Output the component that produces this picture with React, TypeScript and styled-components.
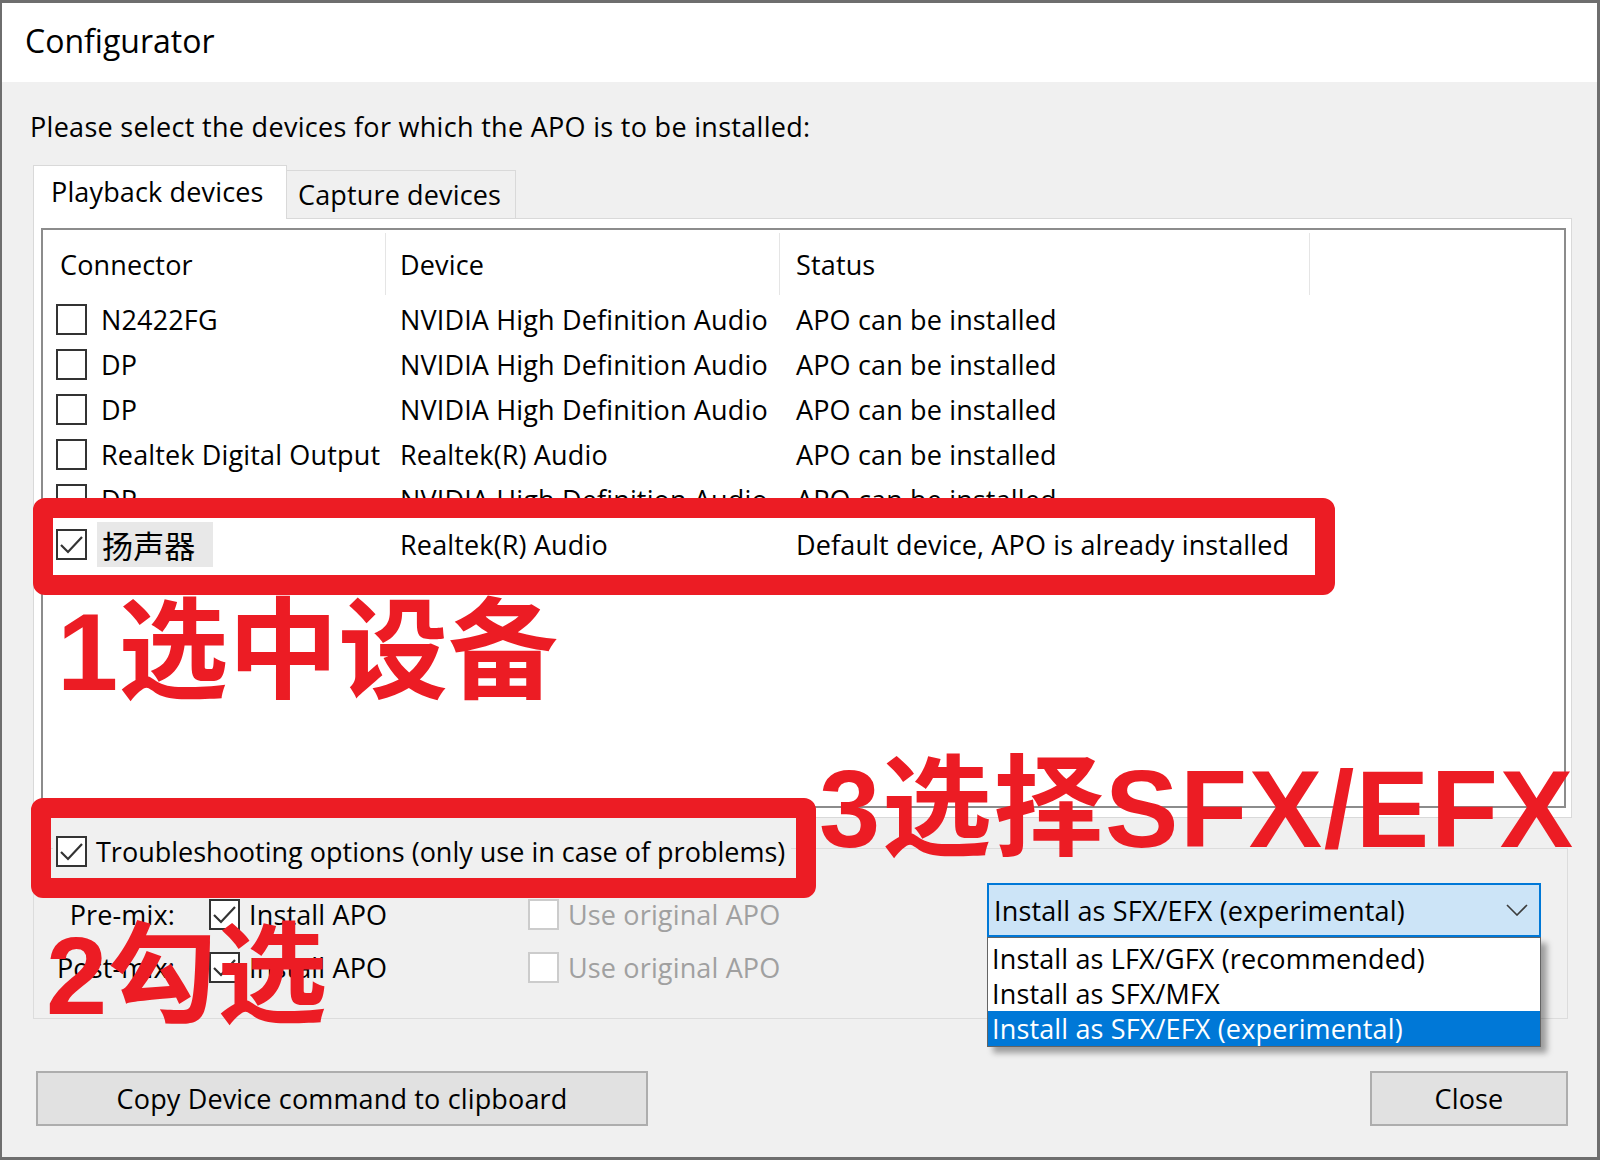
import React from 'react';
import styled, { createGlobalStyle } from 'styled-components';

const GlobalStyle = createGlobalStyle`
  html, body { margin: 0; padding: 0; background: #ffffff; }
  body { font-family: "Open Sans", "Noto Sans CJK SC", sans-serif; color: #000; }
  * { box-sizing: border-box; }
`;

const Window = styled.div`
  position: relative;
  width: 1600px;
  height: 1160px;
  display: flex;
  flex-direction: column;
  background: #f0f0f0;
  border: 3px solid #6e6e6e;
  border-left-width: 2px;
  overflow: hidden;
  font-size: 27px;
  line-height: 37px;
  letter-spacing: 0.15px;
`;

const TitleBar = styled.div`
  height: 79px;
  flex-shrink: 0;
  display: flex;
  align-items: center;
  padding: 0 0 4px 23px;
  background: #ffffff;
  font-size: 32px;
  line-height: 44px;
  letter-spacing: 0;
  color: #000;
`;

const Body = styled.div`
  flex: 1;
  display: flex;
  flex-direction: column;
  padding: 26px 25px 0 31px;
`;

const Prompt = styled.div`
  margin-left: -3px;
  height: 37px;
  letter-spacing: 0.3px;
  white-space: nowrap;
`;

const TabStrip = styled.div`
  display: flex;
  align-items: flex-end;
  height: 53px;
  margin-top: 20px;
`;

const Tab = styled.div<{ $active?: boolean; $w: number }>`
  position: relative;
  width: ${(p) => p.$w}px;
  height: ${(p) => (p.$active ? 54 : 48)}px;
  margin-bottom: ${(p) => (p.$active ? -1 : 0)}px;
  z-index: ${(p) => (p.$active ? 1 : 0)};
  background: ${(p) => (p.$active ? '#ffffff' : '#f0f0f0')};
  border: 1px solid #d9d9d9;
  border-bottom: none;
  border-left-width: ${(p) => (p.$active ? 1 : 0)}px;
  padding: ${(p) => (p.$active ? '7px 0 0 17px' : '5px 0 0 11px')};
  white-space: nowrap;
`;

const TabPanel = styled.div`
  height: 600px;
  background: #ffffff;
  border: 1px solid #d9d9d9;
  padding: 9px 5px 9px 7px;
`;

const ListBox = styled.div`
  height: 100%;
  background: #ffffff;
  border: 2px solid #8c8c8c;
`;

const columns = '343px 394px 530px 1fr';

const HeaderRow = styled.div`
  display: grid;
  grid-template-columns: ${columns};
  height: 67px;
`;

const HeaderCell = styled.div<{ $indent: number; $last?: boolean }>`
  margin-top: 3px;
  height: 62px;
  display: flex;
  align-items: center;
  padding-left: ${(p) => p.$indent}px;
  border-right: ${(p) => (p.$last ? 'none' : '1px solid #e5e5e5')};
`;

const Row = styled.div`
  display: grid;
  grid-template-columns: ${columns};
  height: 45px;
  align-items: center;
`;

const Cell = styled.div<{ $indent: number }>`
  height: 45px;
  display: flex;
  align-items: center;
  gap: 14px;
  padding-left: ${(p) => p.$indent}px;
  white-space: nowrap;
`;

const ItemLabel = styled.span<{ $selected?: boolean; $cjk?: boolean }>`
  height: 45px;
  display: flex;
  align-items: center;
  margin-left: ${(p) => (p.$selected ? -4 : 0)}px;
  padding: ${(p) => (p.$selected ? '0 18px 0 5px' : '0')};
  background: ${(p) => (p.$selected ? '#e8e8e8' : 'transparent')};
  font-family: ${(p) => (p.$cjk ? '"Noto Sans CJK SC", sans-serif' : 'inherit')};
  font-size: ${(p) => (p.$cjk ? 31 : 27)}px;
`;

const Box = styled.span<{ $disabled?: boolean }>`
  width: 31px;
  height: 31px;
  flex-shrink: 0;
  display: flex;
  background: #ffffff;
  border: 2px solid ${(p) => (p.$disabled ? '#cccccc' : '#333333')};
`;

const GroupBox = styled.div`
  margin-top: 30px;
  margin-right: 4px;
  border: 1px solid #dcdcdc;
  display: flex;
  flex-direction: column;
  padding-bottom: 24px;
`;

const GroupHeader = styled.div`
  align-self: flex-start;
  margin: -17px 0 0 19px;
  height: 38px;
  display: flex;
  align-items: center;
  gap: 9px;
  padding: 0 6px 0 3px;
  background: #f0f0f0;
  white-space: nowrap;
  letter-spacing: 0;
`;

const GroupBody = styled.div`
  display: flex;
  align-items: flex-start;
  margin-top: 18px;
`;

const OptionGrid = styled.div`
  display: grid;
  grid-template-columns: 141px 285px auto;
  grid-auto-rows: 53px;
  column-gap: 34px;
  align-items: center;
`;

const OptionLabel = styled.span`
  justify-self: end;
  white-space: nowrap;
`;

const Option = styled.label<{ $disabled?: boolean }>`
  display: flex;
  align-items: center;
  gap: 9px;
  white-space: nowrap;
  color: ${(p) => (p.$disabled ? '#a0a0a0' : '#000')};
`;

const ComboWrap = styled.div`
  position: relative;
  margin: -5px 26px 0 auto;
  width: 554px;
  height: 54px;
`;

const Combo = styled.div`
  height: 100%;
  display: flex;
  align-items: center;
  justify-content: space-between;
  padding: 0 11px 0 5px;
  background: #cce4f7;
  border: 2px solid #0078d7;
  white-space: nowrap;
`;

const DropList = styled.div`
  position: absolute;
  top: 100%;
  left: 0;
  right: 0;
  z-index: 2;
  background: #ffffff;
  border: 1px solid #646464;
  padding-top: 3px;
  box-shadow: 6px 6px 6px rgba(0, 0, 0, 0.35);
`;

const DropItem = styled.div<{ $selected?: boolean }>`
  height: 35px;
  display: flex;
  align-items: center;
  padding-left: 4px;
  white-space: nowrap;
  background: ${(p) => (p.$selected ? '#0078d7' : 'transparent')};
  color: ${(p) => (p.$selected ? '#ffffff' : '#000')};
`;

const ButtonRow = styled.div`
  display: flex;
  justify-content: space-between;
  margin-top: 52px;
  padding: 0 4px 0 3px;
`;

const Button = styled.button<{ $w: number }>`
  width: ${(p) => p.$w}px;
  height: 55px;
  background: #e1e1e1;
  border: 2px solid #adadad;
  font-family: inherit;
  font-size: 27px;
  letter-spacing: 0.15px;
  color: #000;
  padding: 0;
`;

const Highlight = styled.div<{ $x: number; $y: number; $w: number; $h: number }>`
  position: absolute;
  left: ${(p) => p.$x}px;
  top: ${(p) => p.$y}px;
  width: ${(p) => p.$w}px;
  height: ${(p) => p.$h}px;
  border: 20px solid #ec1c24;
  border-radius: 12px;
  z-index: 5;
`;

const Callout = styled.div<{ $x: number; $y: number; $spacing?: number }>`
  position: absolute;
  left: ${(p) => p.$x}px;
  top: ${(p) => p.$y}px;
  z-index: 6;
  font-family: "Liberation Sans", "Noto Sans CJK SC", sans-serif;
  font-weight: 700;
  font-size: 110px;
  line-height: 110px;
  letter-spacing: ${(p) => p.$spacing ?? 0}px;
  color: #ec1c24;
  white-space: nowrap;
`;

const CheckBox = ({ checked, disabled }: { checked?: boolean; disabled?: boolean }) => (
  <Box $disabled={disabled}>
    {checked && (
      <svg width="27" height="27" viewBox="0 0 27 27">
        <polyline points="3,14 10,21 24,6" fill="none" stroke="#333333" strokeWidth="2.2" />
      </svg>
    )}
  </Box>
);

const Chevron = () => (
  <svg width="22" height="12" viewBox="0 0 22 12">
    <polyline points="1,1 11,11 21,1" fill="none" stroke="#3c3c3c" strokeWidth="1.6" />
  </svg>
);

type Device = {
  connector: string;
  device: string;
  status: string;
  checked?: boolean;
  selected?: boolean;
  cjk?: boolean;
};

const devices: Device[] = [
  { connector: 'N2422FG', device: 'NVIDIA High Definition Audio', status: 'APO can be installed' },
  { connector: 'DP', device: 'NVIDIA High Definition Audio', status: 'APO can be installed' },
  { connector: 'DP', device: 'NVIDIA High Definition Audio', status: 'APO can be installed' },
  { connector: 'Realtek Digital Output', device: 'Realtek(R) Audio', status: 'APO can be installed' },
  { connector: 'DP', device: 'NVIDIA High Definition Audio', status: 'APO can be installed' },
  {
    connector: '扬声器',
    device: 'Realtek(R) Audio',
    status: 'Default device, APO is already installed',
    checked: true,
    selected: true,
    cjk: true,
  },
];

const modes = [
  'Install as LFX/GFX (recommended)',
  'Install as SFX/MFX',
  'Install as SFX/EFX (experimental)',
];

export default function App() {
  return (
    <>
      <GlobalStyle />
      <Window>
        <TitleBar>Configurator</TitleBar>
        <Body>
          <Prompt>Please select the devices for which the APO is to be installed:</Prompt>
          <TabStrip>
            <Tab $active $w={254}>Playback devices</Tab>
            <Tab $w={229}>Capture devices</Tab>
          </TabStrip>
          <TabPanel>
            <ListBox>
              <HeaderRow>
                <HeaderCell $indent={17}>Connector</HeaderCell>
                <HeaderCell $indent={14}>Device</HeaderCell>
                <HeaderCell $indent={16}>Status</HeaderCell>
                <HeaderCell $indent={0} $last />
              </HeaderRow>
              {devices.map((d, i) => (
                <Row key={i}>
                  <Cell $indent={13}>
                    <CheckBox checked={d.checked} />
                    <ItemLabel $selected={d.selected} $cjk={d.cjk}>
                      {d.connector}
                    </ItemLabel>
                  </Cell>
                  <Cell $indent={14}>{d.device}</Cell>
                  <Cell $indent={16}>{d.status}</Cell>
                  <Cell $indent={0} />
                </Row>
              ))}
            </ListBox>
          </TabPanel>
          <GroupBox>
            <GroupHeader>
              <CheckBox checked />
              <span>Troubleshooting options (only use in case of problems)</span>
            </GroupHeader>
            <GroupBody>
              <OptionGrid>
                <OptionLabel>Pre-mix:</OptionLabel>
                <Option>
                  <CheckBox checked />
                  Install APO
                </Option>
                <Option $disabled>
                  <CheckBox disabled />
                  Use original APO
                </Option>
                <OptionLabel>Post-mix:</OptionLabel>
                <Option>
                  <CheckBox checked />
                  Install APO
                </Option>
                <Option $disabled>
                  <CheckBox disabled />
                  Use original APO
                </Option>
              </OptionGrid>
              <ComboWrap>
                <Combo>
                  <span>Install as SFX/EFX (experimental)</span>
                  <Chevron />
                </Combo>
                <DropList>
                  {modes.map((m, i) => (
                    <DropItem key={m} $selected={i === 2}>
                      {m}
                    </DropItem>
                  ))}
                </DropList>
              </ComboWrap>
            </GroupBody>
          </GroupBox>
          <ButtonRow>
            <Button $w={612}>Copy Device command to clipboard</Button>
            <Button $w={198}>Close</Button>
          </ButtonRow>
        </Body>

        <Highlight $x={31} $y={495} $w={1302} $h={97} />
        <Highlight $x={29} $y={795} $w={785} $h={100} />
        <Callout $x={55} $y={594}>1选中设备</Callout>
        <Callout $x={44} $y={918}>2勾选</Callout>
        <Callout $x={817} $y={751} $spacing={1.6}>3选择SFX/EFX</Callout>
      </Window>
    </>
  );
}
